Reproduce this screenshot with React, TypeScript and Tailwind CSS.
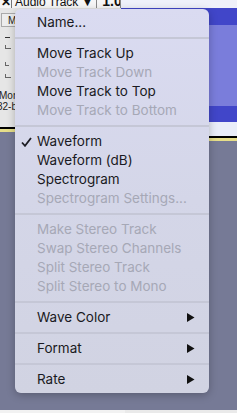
import React from "react";

type Item =
  | { kind: "item"; label: string; disabled?: boolean; checked?: boolean; submenu?: boolean }
  | { kind: "sep" };

const items: Item[] = [
  { kind: "item", label: "Name..." },
  { kind: "sep" },
  { kind: "item", label: "Move Track Up" },
  { kind: "item", label: "Move Track Down", disabled: true },
  { kind: "item", label: "Move Track to Top" },
  { kind: "item", label: "Move Track to Bottom", disabled: true },
  { kind: "sep" },
  { kind: "item", label: "Waveform", checked: true },
  { kind: "item", label: "Waveform (dB)" },
  { kind: "item", label: "Spectrogram" },
  { kind: "item", label: "Spectrogram Settings...", disabled: true },
  { kind: "sep" },
  { kind: "item", label: "Make Stereo Track", disabled: true },
  { kind: "item", label: "Swap Stereo Channels", disabled: true },
  { kind: "item", label: "Split Stereo Track", disabled: true },
  { kind: "item", label: "Split Stereo to Mono", disabled: true },
  { kind: "sep" },
  { kind: "item", label: "Wave Color", submenu: true },
  { kind: "sep" },
  { kind: "item", label: "Format", submenu: true },
  { kind: "sep" },
  { kind: "item", label: "Rate", submenu: true },
];

function TrackMenu() {
  return (
    <div className="absolute left-[15px] top-[9px] w-[194px] rounded-[6px] bg-gradient-to-b from-[#dadbf1] via-[#d4d6e8] to-[#d1d3e2] py-[4px] shadow-[0_2px_8px_rgba(0,0,0,0.25)] font-['Inter',sans-serif] text-[13.5px]">
      {items.map((it, i) =>
        it.kind === "sep" ? (
          <div key={i} className="flex h-[12px] items-center">
            <div className="h-[2px] w-full bg-[#c5c7d6]" />
          </div>
        ) : (
          <div key={i} className="relative flex h-[19px] items-center pl-[22px] pr-[14px]">
            {it.checked && (
              <svg className="absolute left-[6px] top-[5px]" width="11" height="10" viewBox="0 0 11 10">
                <path d="M1 5.5 L4 8.8 L10 1" fill="none" stroke="#1d1d24" strokeWidth="1.8" />
              </svg>
            )}
            <span className={it.disabled ? "whitespace-nowrap text-[#a6a8b6]" : "whitespace-nowrap text-[#1a1a22]"}>{it.label}</span>
            {it.submenu && (
              <svg className="ml-auto" width="8" height="9" viewBox="0 0 8 9">
                <path d="M0 0 L7.5 4.5 L0 9 Z" fill="#111" />
              </svg>
            )}
          </div>
        )
      )}
    </div>
  );
}

export default function App() {
  return (
    <div className="relative flex h-[413px] w-[237px] flex-col overflow-hidden bg-[#767a96] font-['Liberation_Sans',sans-serif]">
      {/* title strip */}
      <div className="flex h-[8px] shrink-0">
        <div className="flex w-[121px] overflow-hidden whitespace-nowrap border-r border-[#888] bg-[#f6f6f6] text-[12px] leading-[12px] text-[#111]">
          <div className="-mt-[4px] flex w-[12px] shrink-0 justify-center border-r border-[#777] font-bold">✕</div>
          <span className="-mt-[4px] ml-[3px] shrink-0">Audio Track</span>
          <span className="-mt-[5px] ml-[2px] shrink-0 text-[14px]">▼</span>
          <div className="ml-[2px] h-full shrink-0 border-l border-[#888]" />
          <span className="-mt-[5px] ml-[5px] shrink-0 text-[14px] font-bold">1.0</span>
        </div>
        <div className="flex-1 bg-[#eff1fa]" />
      </div>

      {/* track body */}
      <div className="flex shrink-0 items-start">
        <div className="w-[121px]">
          <div className="h-[119px] whitespace-nowrap bg-[#e6e6e6] pt-[5px] text-[10px] text-[#222]">
            <div className="ml-[1px] flex h-[14px] w-[50px] items-center border border-[#aaa] bg-[#ededed] pl-[6px]">Mute</div>
            <div className="ml-[5px] mt-[10px] h-[1px] w-[5px] bg-[#333]" />
            <div className="ml-[5px] mt-[7px] h-[4px] w-[6px] border-b border-l border-[#666]" />
            <div className="ml-[5px] mt-[13px] h-[4px] w-[4px] border-l border-b border-[#666]" />
            <div className="ml-[5px] mt-[8px] h-[4px] w-[6px] border-b border-l border-[#666]" />
            <div className="-ml-[1px] mt-[12px] leading-[11px]">Mono, 44100Hz</div>
            <div className="-ml-[3px] leading-[11px]">32-bit float</div>
          </div>
          <div className="h-[2px] bg-black" />
          <div className="h-[3px] bg-[#e6de8a]" />
        </div>
        <div className="flex-1">
          <div className="h-[17px] bg-[#4146c9]" />
          <div className="h-[81px] bg-[#7a7ddb]" />
          <div className="h-[16px] bg-[#4146c9]" />
          <div className="h-[14px] bg-[#e9edf9]" />
          <div className="h-[2px] bg-black" />
          <div className="h-[3px] bg-[#e6de8a]" />
        </div>
      </div>

      <div className="flex-1" />
      <div className="flex h-[3px] shrink-0">
        <div className="w-[125px] bg-[#f2f2f2]" />
        <div className="flex-1 bg-[#eaeaea]" />
      </div>

      <TrackMenu />
    </div>
  );
}
